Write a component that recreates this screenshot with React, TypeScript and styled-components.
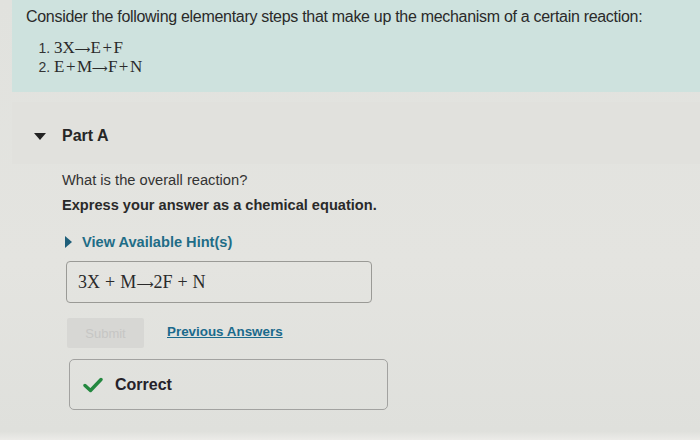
import React from 'react';
import styled, { createGlobalStyle } from 'styled-components';

const GlobalStyle = createGlobalStyle`
  html, body {
    margin: 0;
    padding: 0;
    background: #e3e3df;
  }
  body {
    font-family: "Liberation Sans", Arial, sans-serif;
    color: #2b2b2b;
  }
`;

const Page = styled.div`
  width: 700px;
  height: 440px;
  overflow: hidden;
  padding-left: 12px;
  box-sizing: border-box;
  background: linear-gradient(180deg, #e1e2de 0%, #e4e4e0 60%, #dfe0dc 98%, #ecebe8 100%);
`;

const IntroPanel = styled.div`
  background: #cee2de;
  height: 92px;
  box-sizing: border-box;
  padding: 8px 0 0 14px;
`;

const IntroText = styled.p`
  margin: 0;
  font-size: 16px;
  letter-spacing: -0.3px;
  color: #2a2a2a;
`;

const StepList = styled.ol`
  margin: 13px 0 0;
  padding-left: 28px;
  font-size: 14px;
  color: #333;
  line-height: 18.5px;
`;

const MathText = styled.span<{ $size: number }>`
  font-family: "Liberation Serif", "Times New Roman", serif;
  font-size: ${({ $size }) => $size}px;
  color: #2a2a2a;
`;

const Arrow = styled.span<{ $size: number }>`
  font-family: "DejaVu Sans", sans-serif;
  font-size: ${({ $size }) => $size}px;
  line-height: 1;
`;

const Plus = styled.span<{ $gap: number }>`
  margin: 0 ${({ $gap }) => $gap}px;
`;

const PartHeader = styled.div`
  margin-top: 10px;
  height: 62px;
  box-sizing: border-box;
  padding: 6px 0 0 22px;
  display: flex;
  align-items: center;
  background: #e1e1dd;
`;

const Caret = styled.span`
  width: 0;
  height: 0;
  border-left: 6px solid transparent;
  border-right: 6px solid transparent;
  border-top: 7px solid #222;
  margin-right: 16px;
`;

const PartTitle = styled.span`
  font-size: 16px;
  font-weight: 700;
  color: #262626;
`;

const Body = styled.div`
  padding: 8px 0 0 50px;
  display: flex;
  flex-direction: column;
  align-items: flex-start;
`;

const Question = styled.p`
  margin: 0;
  font-size: 14.7px;
  color: #333;
`;

const Instruction = styled.p`
  margin: 9px 0 0;
  font-size: 14.6px;
  font-weight: 700;
  color: #2a2a2a;
`;

const HintToggle = styled.div`
  margin-top: 21px;
  display: flex;
  align-items: center;
  font-size: 14.6px;
  font-weight: 700;
  color: #1f6d87;
  padding-left: 3px;
`;

const HintArrow = styled.span`
  width: 0;
  height: 0;
  border-top: 6px solid transparent;
  border-bottom: 6px solid transparent;
  border-left: 7px solid #1f5f7a;
  margin-right: 10px;
`;

const AnswerBox = styled.div`
  margin: 11px 0 0 4px;
  width: 306px;
  height: 42px;
  box-sizing: border-box;
  border: 1px solid #9a9a96;
  border-radius: 4px;
  display: flex;
  align-items: center;
  padding-left: 11px;
`;

const Actions = styled.div`
  margin: 15px 0 0 5px;
  display: flex;
  align-items: center;
  gap: 23px;
`;

const SubmitButton = styled.button`
  width: 77px;
  height: 30px;
  border: none;
  border-radius: 2px;
  background: #d7d7d4;
  color: #c6c6c4;
  font-family: "Liberation Sans", Arial, sans-serif;
  font-size: 13px;
  padding: 0;
`;

const LinkText = styled.a`
  font-size: 13.4px;
  font-weight: 700;
  color: #1b6a8c;
  text-decoration: underline;
  margin-top: -3px;
`;

const FeedbackBox = styled.div`
  margin: 11px 0 0 7px;
  width: 319px;
  height: 51px;
  box-sizing: border-box;
  border: 1px solid #a2a2a0;
  border-radius: 5px;
  display: flex;
  align-items: center;
  padding-left: 13px;
  gap: 12px;
`;

const FeedbackText = styled.span`
  font-size: 16px;
  font-weight: 700;
  color: #25222a;
`;

const CheckIcon = () => (
  <svg width="20" height="16" viewBox="0 0 20 16">
    <path d="M2 8.5 L7.5 13.5 L18 2.5" fill="none" stroke="#23883f" strokeWidth="3.4" strokeLinecap="round" strokeLinejoin="round" />
  </svg>
);

// terms joined by "+", with a reaction arrow between the two sides
const Equation = ({
  left,
  right,
  size,
  gap,
}: {
  left: string[];
  right: string[];
  size: number;
  gap: number;
}) => {
  const side = (terms: string[]) =>
    terms.map((t, i) => (
      <React.Fragment key={i}>
        {i > 0 && <Plus $gap={gap}>+</Plus>}
        {t}
      </React.Fragment>
    ));
  return (
    <MathText $size={size}>
      {side(left)}
      <Arrow $size={Math.round(size * 0.66)}>⟶</Arrow>
      {side(right)}
    </MathText>
  );
};

export default function App() {
  return (
    <>
      <GlobalStyle />
      <Page>
        <IntroPanel>
          <IntroText>Consider the following elementary steps that make up the mechanism of a certain reaction:</IntroText>
          <StepList>
            <li><Equation left={['3X']} right={['E', 'F']} size={17} gap={1.5} /></li>
            <li><Equation left={['E', 'M']} right={['F', 'N']} size={17} gap={1.5} /></li>
          </StepList>
        </IntroPanel>
        <PartHeader>
          <Caret />
          <PartTitle>Part A</PartTitle>
        </PartHeader>
        <Body>
          <Question>What is the overall reaction?</Question>
          <Instruction>Express your answer as a chemical equation.</Instruction>
          <HintToggle>
            <HintArrow />
            View Available Hint(s)
          </HintToggle>
          <AnswerBox>
            <Equation left={['3X', 'M']} right={['2F', 'N']} size={18} gap={5} />
          </AnswerBox>
          <Actions>
            <SubmitButton>Submit</SubmitButton>
            <LinkText>Previous Answers</LinkText>
          </Actions>
          <FeedbackBox>
            <CheckIcon />
            <FeedbackText>Correct</FeedbackText>
          </FeedbackBox>
        </Body>
      </Page>
    </>
  );
}
